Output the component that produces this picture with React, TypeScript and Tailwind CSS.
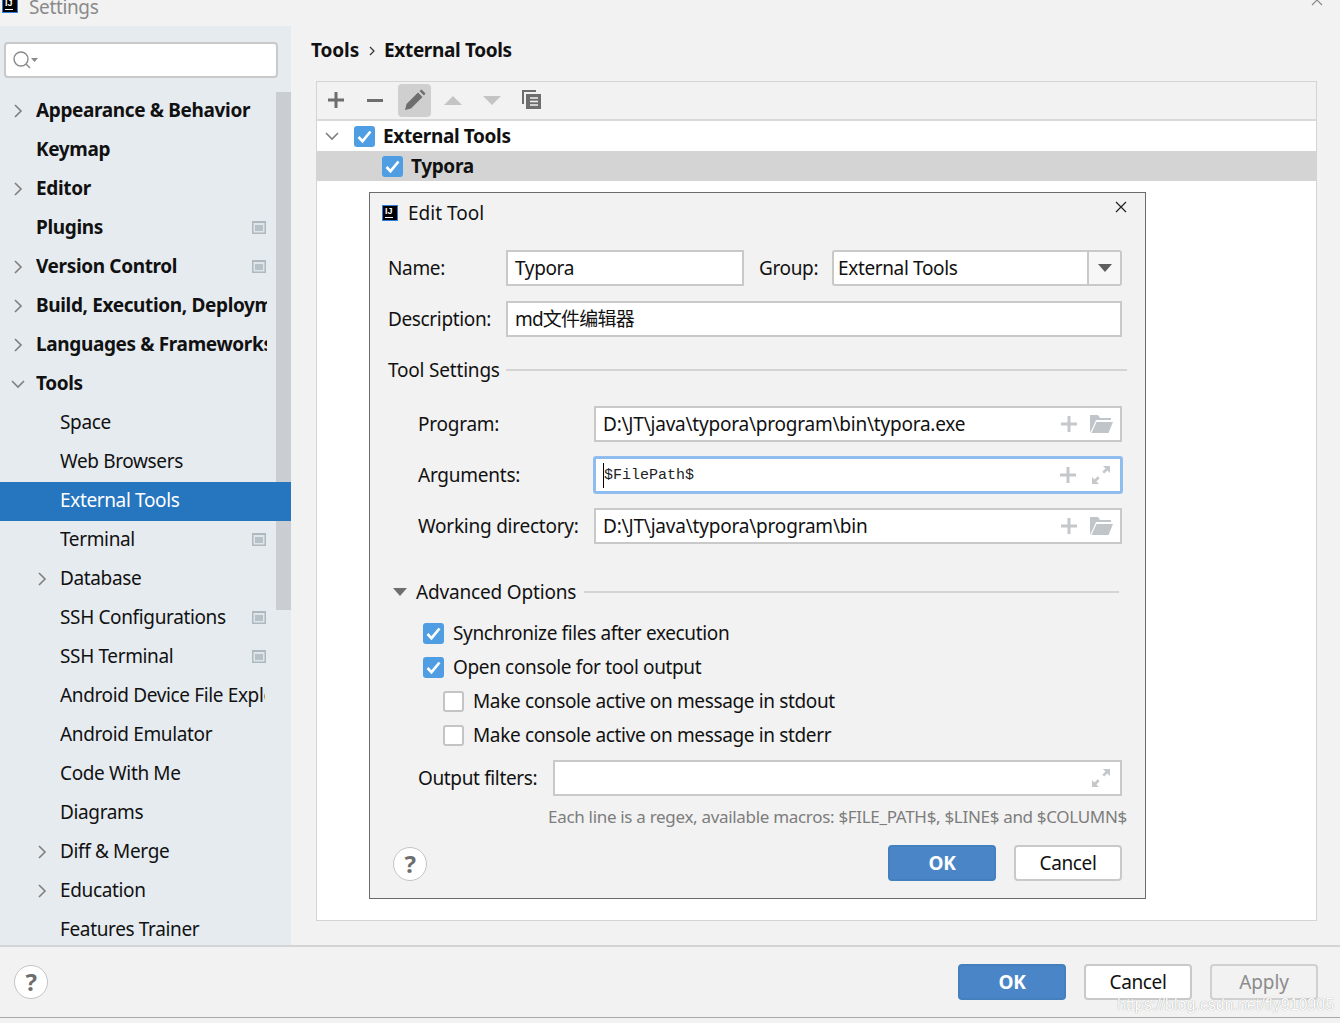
import type { ReactNode } from 'react';

const font = '"Noto Sans", "Noto Sans CJK SC", sans-serif';

type NavItem = { label: string; depth: 0 | 1; arrow?: 'right' | 'down'; badge?: boolean; active?: boolean };

const navItems: NavItem[] = [
  { label: 'Appearance & Behavior', depth: 0, arrow: 'right' },
  { label: 'Keymap', depth: 0 },
  { label: 'Editor', depth: 0, arrow: 'right' },
  { label: 'Plugins', depth: 0, badge: true },
  { label: 'Version Control', depth: 0, arrow: 'right', badge: true },
  { label: 'Build, Execution, Deployment', depth: 0, arrow: 'right' },
  { label: 'Languages & Frameworks', depth: 0, arrow: 'right' },
  { label: 'Tools', depth: 0, arrow: 'down' },
  { label: 'Space', depth: 1 },
  { label: 'Web Browsers', depth: 1 },
  { label: 'External Tools', depth: 1, active: true },
  { label: 'Terminal', depth: 1, badge: true },
  { label: 'Database', depth: 1, arrow: 'right' },
  { label: 'SSH Configurations', depth: 1, badge: true },
  { label: 'SSH Terminal', depth: 1, badge: true },
  { label: 'Android Device File Explorer', depth: 1 },
  { label: 'Android Emulator', depth: 1 },
  { label: 'Code With Me', depth: 1 },
  { label: 'Diagrams', depth: 1 },
  { label: 'Diff & Merge', depth: 1, arrow: 'right' },
  { label: 'Education', depth: 1, arrow: 'right' },
  { label: 'Features Trainer', depth: 1 },
];

const Chevron = ({ down, color = '#7f7f7f' }: { down?: boolean; color?: string }) => (
  <svg width="14" height="14" viewBox="0 0 14 14" fill="none" stroke={color} strokeWidth="1.6">
    {down ? <path d="M1 4l6 6 6-6" /> : <path d="M4 1l6 6-6 6" />}
  </svg>
);

const ProjectBadge = () => (
  <svg width="14" height="13" viewBox="0 0 14 13" className="shrink-0">
    <rect x="0" y="0" width="14" height="13" fill="#aeb8bf" />
    <rect x="1.5" y="2" width="11" height="9.5" fill="#dfe5ea" />
    <rect x="3" y="4" width="8" height="6" fill="#b7c1c8" />
  </svg>
);

const IJLogo = ({ className }: { className?: string }) => (
  <div className={`w-[16px] h-[16px] bg-black border border-[#2b7de0] relative overflow-hidden shrink-0 ${className ?? ''}`}>
    <span className="absolute left-[2px] top-[1px] text-[9px] font-bold tracking-normal text-white leading-[9px]" style={{ fontFamily: '"Liberation Sans", sans-serif' }}>IJ</span>
    <div className="absolute left-[2px] top-[11px] w-[8px] h-[1px] bg-white" />
  </div>
);

const CheckBox = ({ checked = true }: { checked?: boolean }) =>
  checked ? (
    <div className="w-[21px] h-[21px] rounded-[3px] bg-[#4f9ee3] flex items-center justify-center shrink-0">
      <svg width="15" height="15" viewBox="0 0 15 15" fill="none" stroke="#fff" strokeWidth="2.6">
        <path d="M1.5 8l4 4.2L13.5 2.5" />
      </svg>
    </div>
  ) : (
    <div className="w-[21px] h-[21px] rounded-[3px] bg-white border-2 border-[#c4c4c4] shrink-0" />
  );

const Plus = ({ size = 16, color = '#c4c8cb', width = 3 }: { size?: number; color?: string; width?: number }) => (
  <svg width={size} height={size} viewBox="0 0 16 16" stroke={color} strokeWidth={width} className="shrink-0">
    <path d="M8 0v16M0 8h16" />
  </svg>
);

const FolderIcon = () => (
  <svg width="23" height="18" viewBox="0 0 23 18" fill="#bfc5c9" className="shrink-0">
    <path d="M0 0h8l2 3h11v2H6L2.5 13 0 18z" />
    <path d="M6.5 7H23l-4.5 11H1.5z" />
  </svg>
);

const ExpandIcon = () => (
  <svg width="20" height="20" viewBox="0 0 20 20" fill="#c4c8cb" className="shrink-0">
    <path d="M12 1h7v7l-2.6-2.6-3.2 3.2-1.9-1.9 3.2-3.2z" />
    <path d="M1 12v7h7l-2.6-2.6 3.2-3.2-1.9-1.9-3.2 3.2z" />
  </svg>
);

const HelpButton = () => (
  <div className="w-[34px] h-[34px] rounded-full bg-white border border-[#c4c4c4] flex items-center justify-center text-[24px] font-bold text-[#6e6e6e] shrink-0">
    ?
  </div>
);

const TextInput = ({ children, className = '' }: { children?: ReactNode; className?: string }) => (
  <div className={`h-[36px] bg-white border-2 border-[#c9c9c9] pl-[7px] flex items-center text-[19px] text-[#111] whitespace-nowrap ${className}`}>
    {children}
  </div>
);

const ActionButton = ({ label, primary, disabled }: { label: string; primary?: boolean; disabled?: boolean }) => (
  <div
    className={`w-[108px] h-[36px] rounded-[4px] border-2 flex items-center justify-center text-[19px] ${
      primary
        ? 'bg-[#4a86c7] border-[#447fbe] text-white font-bold'
        : disabled
          ? 'border-[#d0d0d0] text-[#8c8c8c] tracking-[-0.1px]'
          : 'bg-white border-[#c9c9c9] text-[#111]'
    }`}
  >
    {label}
  </div>
);

const Row = ({ label, children, className = '' }: { label: string; children: ReactNode; className?: string }) => (
  <div className={`flex items-center pl-[48px] ${className}`}>
    <span className="w-[176px] text-[19px] tracking-[-0.24px] text-[#111] whitespace-nowrap">{label}</span>
    {children}
  </div>
);

const CheckRow = ({ label, checked, indent }: { label: string; checked?: boolean; indent?: boolean }) => (
  <div className={`h-[34px] flex items-center gap-[9px] ${indent ? 'pl-[73px]' : 'pl-[53px]'}`}>
    <CheckBox checked={checked} />
    <span className="text-[19px] text-[#111] whitespace-nowrap">{label}</span>
  </div>
);

const EditToolDialog = () => (
  <div className="absolute left-[52px] top-[110px] w-[777px] h-[707px] bg-[#f2f2f2] border border-[#6b6b6b]">
    <div className="h-[40px] flex items-center pl-[12px] gap-[10px] relative">
      <IJLogo />
      <span className="text-[19px] tracking-normal text-[#111]">Edit Tool</span>
      <svg width="12" height="12" viewBox="0 0 12 12" stroke="#222" strokeWidth="1.2" className="absolute right-[18px] top-[8px]">
        <path d="M1 1l10 10M11 1L1 11" />
      </svg>
    </div>

    <div className="mt-[17px] flex items-center pl-[18px] pr-[23px]">
      <span className="w-[118px] text-[19px] text-[#111]">Name:</span>
      <TextInput className="w-[238px]">Typora</TextInput>
      <span className="ml-[15px] w-[73px] text-[19px] text-[#111]">Group:</span>
      <div className="flex-1 h-[36px] flex bg-white border-2 border-[#c9c9c9] rounded-[3px] text-[19px] text-[#111]">
        <span className="flex-1 pl-[4px] flex items-center">External Tools</span>
        <div className="w-[33px] bg-[#f7f7f7] border-l-2 border-[#c9c9c9] flex items-center justify-center">
          <div className="w-0 h-0 border-x-[7px] border-x-transparent border-t-[8px] border-t-[#5f5f5f]" />
        </div>
      </div>
    </div>

    <div className="mt-[15px] flex items-center pl-[18px] pr-[23px]">
      <span className="w-[118px] text-[19px] text-[#111]">Description:</span>
      <TextInput className="flex-1 tracking-[-0.8px]">md文件编辑器</TextInput>
    </div>

    <div className="mt-[21px] h-[24px] flex items-center gap-[6px] pl-[18px] pr-[18px]">
      <span className="text-[19px] tracking-[-0.2px] text-[#111] whitespace-nowrap">Tool Settings</span>
      <div className="flex-1 h-[2px] bg-[#d4d4d4]" />
    </div>

    <Row label="Program:" className="mt-[24px] pr-[23px]">
      <TextInput className="flex-1 gap-[13px] pr-[7px] tracking-[-0.22px]">
        <span className="flex-1">D:\JT\java\typora\program\bin\typora.exe</span>
        <Plus />
        <FolderIcon />
      </TextInput>
    </Row>
    <Row label="Arguments:" className="mt-[15px] pr-[23px]">
      <div className="flex-1 h-[36px] bg-white border-2 border-[#8fbcee] ring-1 ring-[#93bff0] rounded-[2px] pl-[7px] pr-[9px] flex items-center gap-[15px]">
        <span className="flex-1 border-l border-black text-[15px] leading-[25px] tracking-normal text-[#222]" style={{ fontFamily: '"Liberation Mono", monospace' }}>
          $FilePath$
        </span>
        <Plus />
        <ExpandIcon />
      </div>
    </Row>
    <Row label="Working directory:" className="mt-[15px] pr-[23px]">
      <TextInput className="flex-1 gap-[13px] pr-[7px] tracking-[-0.2px]">
        <span className="flex-1">D:\JT\java\typora\program\bin</span>
        <Plus />
        <FolderIcon />
      </TextInput>
    </Row>

    <div className="mt-[36px] h-[24px] flex items-center pl-[23px] pr-[26px]">
      <div className="w-0 h-0 border-x-[7px] border-x-transparent border-t-[8px] border-t-[#6e6e6e]" />
      <span className="ml-[9px] text-[19px] tracking-[-0.17px] text-[#111] whitespace-nowrap">Advanced Options</span>
      <div className="ml-[8px] flex-1 h-[2px] bg-[#d4d4d4]" />
    </div>

    <div className="mt-[12px]">
      <CheckRow label="Synchronize files after execution" checked />
      <CheckRow label="Open console for tool output" checked />
      <CheckRow label="Make console active on message in stdout" checked={false} indent />
      <CheckRow label="Make console active on message in stderr" checked={false} indent />
    </div>

    <div className="mt-[8px] flex items-center pl-[48px] pr-[23px]">
      <span className="w-[135px] text-[19px] text-[#111] whitespace-nowrap">Output filters:</span>
      <TextInput className="flex-1 justify-end pr-[9px]">
        <ExpandIcon />
      </TextInput>
    </div>

    <div className="mt-[9px] h-[24px] pr-[18px] flex items-center justify-end text-[17px] tracking-[-0.31px] text-[#7d7d7d] whitespace-nowrap">
      Each line is a regex, available macros: $FILE_PATH$, $LINE$ and $COLUMN$
    </div>

    <div className="mt-[16px] flex items-end pl-[23px] pr-[23px]">
      <HelpButton />
      <div className="flex-1" />
      <ActionButton label="OK" primary />
      <div className="w-[18px]" />
      <ActionButton label="Cancel" />
    </div>
  </div>
);

const Toolbar = () => (
  <div className="h-[39px] flex items-center border-b-2 border-[#d9d9d9] pl-[11px] pb-[1px]">
    <Plus size={16} color="#6e6e6e" />
    <div className="ml-[23px] w-[16px] h-[3px] bg-[#6e6e6e]" />
    <div className="ml-[15px] w-[33px] h-[33px] rounded-[4px] bg-[#cfcfcf] flex items-center justify-center">
      <svg width="22" height="22" viewBox="0 0 22 22" fill="#6e6e6e">
        <path d="M1 21l1.5-6L14 3.5 18.5 8 7 19.5z" />
        <path d="M15.5 2l2-1.5 4 4L20 6.5z" />
      </svg>
    </div>
    <div className="ml-[13px] w-0 h-0 border-x-[9px] border-x-transparent border-b-[9px] border-b-[#c4c4c4]" />
    <div className="ml-[21px] w-0 h-0 border-x-[9px] border-x-transparent border-t-[9px] border-t-[#c4c4c4]" />
    <svg width="20" height="20" viewBox="0 0 20 20" className="ml-[21px]" fill="none">
      <path d="M1 14V1h13" stroke="#6e6e6e" strokeWidth="2" />
      <rect x="4" y="4" width="15" height="15" fill="#6e6e6e" />
      <path d="M8 8h8M8 11.5h8M8 15h8" stroke="#f2f2f2" strokeWidth="1.5" />
    </svg>
  </div>
);

const ExternalToolsPanel = () => (
  <div className="relative h-[840px] border border-[#d4d4d4] bg-white">
    <div className="bg-[#f2f2f2]">
      <Toolbar />
    </div>
    <div className="h-[30px] flex items-center pl-[8px] text-[19px] font-bold text-[#111]">
      <Chevron down />
      <div className="ml-[15px]"><CheckBox /></div>
      <span className="ml-[8px]">External Tools</span>
    </div>
    <div className="h-[30px] flex items-center pl-[65px] bg-[#d4d4d4] text-[19px] font-bold text-[#111]">
      <CheckBox />
      <span className="ml-[8px]">Typora</span>
    </div>
    <EditToolDialog />
  </div>
);

const Sidebar = () => (
  <div className="relative w-[291px] bg-[#e6ebf0] shrink-0">
    <div className="absolute right-0 top-[66px] w-[15px] h-[518px] bg-[#cacdd2]" />
    <div className="pt-[16px] pl-[4px] pr-[13px] relative">
      <div className="h-[36px] bg-white border-2 border-[#c9c9c9] rounded-[4px] flex items-center pl-[7px]">
        <svg width="26" height="22" viewBox="0 0 26 22" fill="none" stroke="#8a8a8a" strokeWidth="1.4">
          <circle cx="8" cy="10" r="7" />
          <path d="M13 15l4 4" />
          <path d="M18 9h7l-3.5 4z" fill="#8a8a8a" stroke="none" />
        </svg>
      </div>
    </div>
    <div className="mt-[14px]">
      {navItems.map(item => (
        <div
          key={item.label}
          className={`relative h-[39px] pb-[2px] flex items-center text-[19px] ${item.active ? 'bg-[#2675bf] text-white' : 'text-[#111]'} ${item.depth === 0 ? 'font-bold' : ''}`}
        >
          <div className={`${item.depth === 0 ? 'w-[36px] pl-[11px]' : 'w-[60px] pl-[35px]'} shrink-0 flex items-center`}>
            {item.arrow && <Chevron down={item.arrow === 'down'} />}
          </div>
          <span className={`${item.depth === 0 ? 'w-[231px]' : 'w-[205px]'} overflow-hidden whitespace-nowrap shrink-0`}>{item.label}</span>
          {item.badge && (
            <div className="absolute left-[252px] top-[12px]">
              <ProjectBadge />
            </div>
          )}
        </div>
      ))}
    </div>
  </div>
);

export default function App() {
  return (
    <div className="w-[1340px] h-[1023px] bg-[#f2f2f2] flex flex-col overflow-hidden relative tracking-[-0.36px]" style={{ fontFamily: font }}>
      <div className="h-[26px] shrink-0 relative overflow-hidden">
        <IJLogo className="absolute left-[2px] top-[-3px]" />
        <span className="absolute left-[29px] top-[-7px] text-[19px] text-[#8a8a8a]">Settings</span>
        <svg width="12" height="12" viewBox="0 0 12 12" stroke="#8a8a8a" strokeWidth="1.2" className="absolute left-[1311px] top-[-6px]">
          <path d="M1 1l10 10M11 1L1 11" />
        </svg>
      </div>

      <div className="h-[919px] flex shrink-0 overflow-hidden">
        <Sidebar />
        <div className="flex-1 pl-[25px] pr-[23px]">
          <div className="h-[55px] pb-[6px] flex items-center text-[19px] font-bold text-[#111] -ml-[5px]">
            <span className="tracking-[-0.1px]">Tools</span>
            <svg width="6" height="10" viewBox="0 0 6 10" fill="none" stroke="#333" strokeWidth="1.2" className="ml-[10px] mr-[9px]">
              <path d="M1 1l4 4-4 4" />
            </svg>
            <span>External Tools</span>
          </div>
          <ExternalToolsPanel />
        </div>
      </div>

      <div className="flex-1 border-t-2 border-[#d4d4d4] relative">
        <div className="h-[71px] border-b border-[#a8a8a8] flex items-center pl-[14px] pr-[22px]">
          <HelpButton />
          <div className="flex-1" />
          <ActionButton label="OK" primary />
          <div className="w-[18px]" />
          <ActionButton label="Cancel" />
          <div className="w-[18px]" />
          <ActionButton label="Apply" disabled />
        </div>
        <span className="absolute left-[1117px] top-[46px] text-[16px] tracking-normal text-white whitespace-nowrap" style={{ fontFamily: '"Liberation Sans", sans-serif', textShadow: '0 0 1px #8a8a8a' }}>
          https://blog.csdn.net/fly910905
        </span>
      </div>
    </div>
  );
}
